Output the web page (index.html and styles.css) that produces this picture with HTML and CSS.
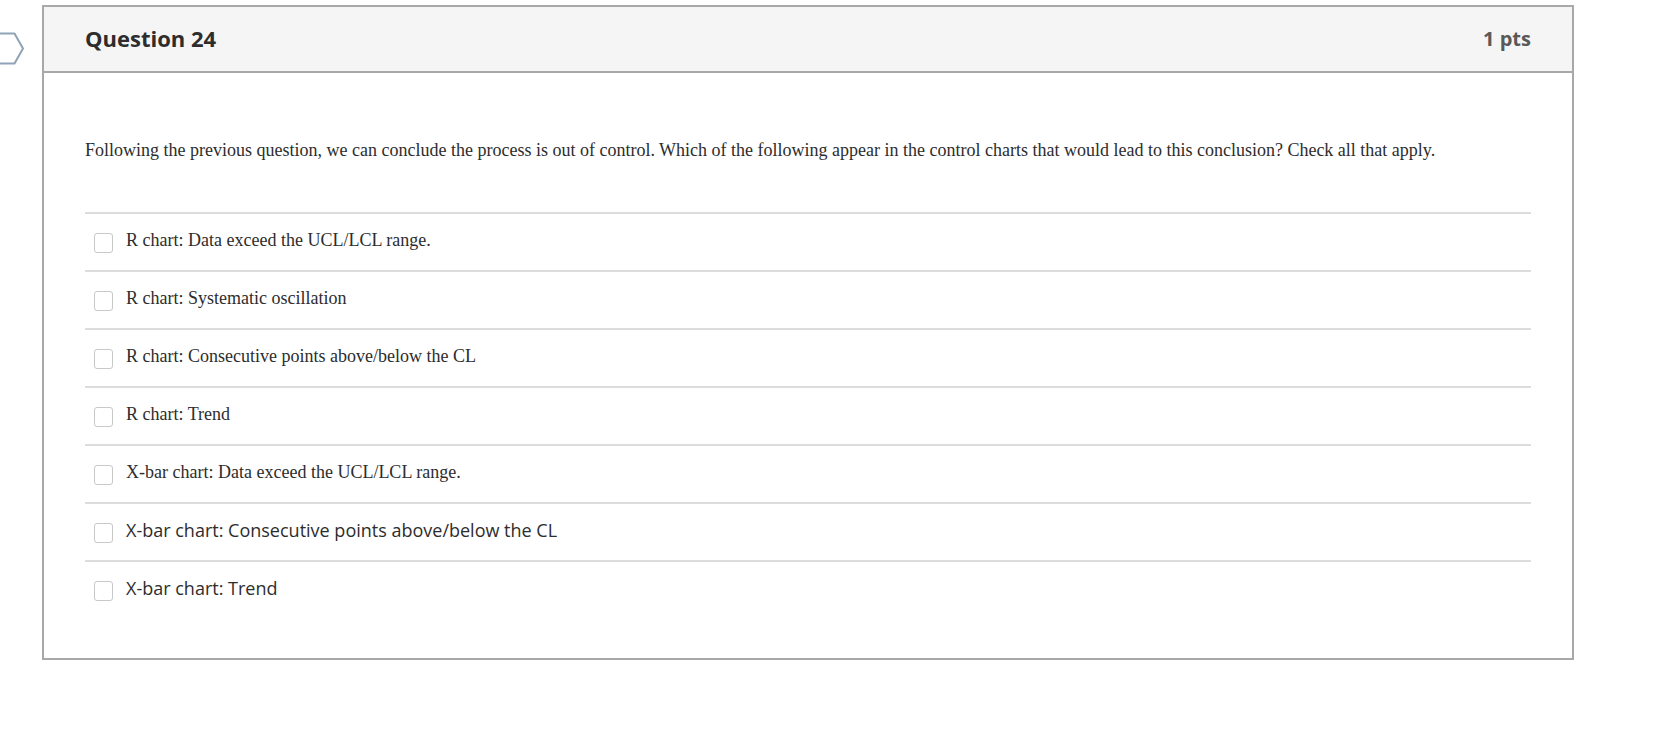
FILE: index.html
```html
<!DOCTYPE html>
<html lang="en">
<head>
<meta charset="utf-8">
<title>Question 24</title>
<link rel="stylesheet" href="styles.css">
</head>
<body>
<div class="page">
  <div class="marker">
    <svg width="26" height="34" viewBox="0 0 26 34" aria-hidden="true">
      <path d="M-4 1.5 H14.5 L23 16.5 L14.5 31.5 H-4" fill="none" stroke="#8fa3b7" stroke-width="2" stroke-linejoin="round"/>
    </svg>
  </div>
  <div class="question">
    <div class="q-header">
      <h2 class="q-title">Question 24</h2>
      <span class="q-points">1 pts</span>
    </div>
    <div class="q-body">
      <p class="q-text">Following the previous question, we can conclude the process is out of control. Which of the following appear in the control charts that would lead to this conclusion? Check all that apply.</p>
      <div class="answers">
        <label class="answer"><span class="box"></span><span class="label serif">R chart: Data exceed the UCL/LCL range.</span></label>
        <label class="answer"><span class="box"></span><span class="label serif">R chart: Systematic oscillation</span></label>
        <label class="answer"><span class="box"></span><span class="label serif">R chart: Consecutive points above/below the CL</span></label>
        <label class="answer"><span class="box"></span><span class="label serif">R chart: Trend</span></label>
        <label class="answer"><span class="box"></span><span class="label serif">X-bar chart: Data exceed the UCL/LCL range.</span></label>
        <label class="answer"><span class="box"></span><span class="label sans">X-bar chart: Consecutive points above/below the CL</span></label>
        <label class="answer"><span class="box"></span><span class="label sans">X-bar chart: Trend</span></label>
      </div>
    </div>
  </div>
</div>
</body>
</html>
```

FILE: styles.css
```css
html, body {
  margin: 0;
  padding: 0;
  background: #ffffff;
}

body {
  font-family: "Open Sans", "Liberation Sans", sans-serif;
  color: #2d3b45;
}

.page {
  display: flex;
  align-items: flex-start;
  padding-top: 5px;
}

.marker {
  width: 42px;
  flex: 0 0 42px;
  padding-top: 27px;
}

.marker svg {
  display: block;
}

.question {
  width: 1532px;
  box-sizing: border-box;
  border: 2px solid #a8a8a8;
}

.q-header {
  display: flex;
  justify-content: space-between;
  align-items: center;
  height: 64px;
  box-sizing: border-box;
  padding: 0 41px 2px;
  background: #f5f5f5;
  border-bottom: 2px solid #a8a8a8;
  height: 66px;
}

.q-title {
  margin: 0;
  font-size: 22px;
  font-weight: 700;
  color: #2d2d2d;
}

.q-points {
  font-size: 20px;
  font-weight: 700;
  color: #595959;
}

.q-body {
  padding: 64px 41px 40px;
}

.q-text {
  margin: 0 0 49px;
  font-family: "Liberation Serif", "Times New Roman", serif;
  font-size: 18px;
  line-height: 26px;
  color: #2d2d2d;
}

.answers {
  display: flex;
  flex-direction: column;
}

.answer {
  display: flex;
  align-items: center;
  gap: 13px;
  height: 56px;
  padding-left: 9px;
  border-top: 2px solid #dcdcdc;
}

.box {
  width: 17px;
  height: 18px;
  margin-top: 2px;
  border: 1px solid #c8c8c8;
  border-radius: 3px;
  background: #fff;
  flex: 0 0 auto;
}

.label {
  color: #2d2d2d;
  margin-bottom: 4px;
}

.serif {
  font-family: "Liberation Serif", "Times New Roman", serif;
  font-size: 18px;
}

.sans {
  font-family: "Open Sans", "Liberation Sans", sans-serif;
  font-size: 18px;
}
```
